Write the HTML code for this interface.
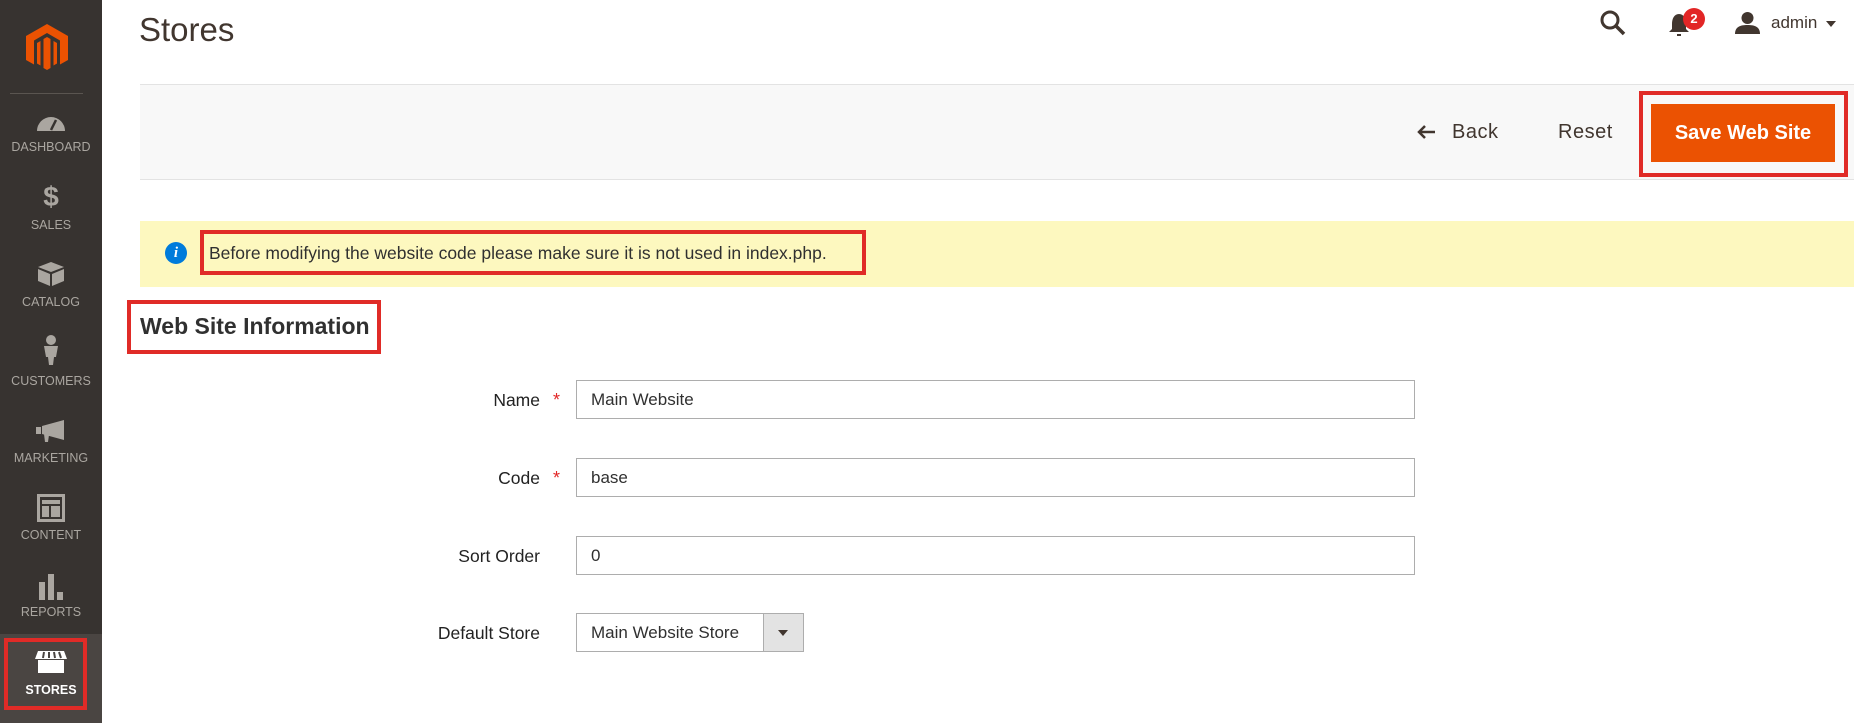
<!DOCTYPE html>
<html><head><meta charset="utf-8"><style>
*{margin:0;padding:0;box-sizing:border-box}
body{width:1860px;height:723px;overflow:hidden;background:#fff;font-family:"Liberation Sans",sans-serif;color:#303030;position:relative}
.a{position:absolute}
#side{left:0;top:0;width:102px;height:723px;background:#373330}
.lbl{position:absolute;left:0;width:102px;text-align:center;color:#aaa6a0;font-size:12.5px;letter-spacing:0}
.ic{position:absolute;left:0;width:102px;display:flex;justify-content:center}
.red{position:absolute;border:4px solid #e02b27}
.inp{position:absolute;left:576px;width:839px;height:39px;border:1px solid #adadad;background:#fff;font-size:17px;padding:9px 14px;color:#303030}
.fl{position:absolute;font-size:17.5px;color:#222;text-align:right;width:300px;left:240px}
.ast{position:absolute;left:553px;color:#e22626;font-size:18px}
</style></head><body>
<div id="side" class="a">
 <svg class="a" style="left:26px;top:24px" width="42" height="48" viewBox="0 0 42 48"><path d="M21 0L42 12V36L34 40.5V16.5L21 9 8 16.5V40.5L0 36V12Z" fill="#eb5202"/><path d="M17.5 15L21 13 24.5 15V44L21 46 17.5 44Z" fill="#eb5202"/><path d="M11 19L14.5 17V41.5L11 39.5Z M31 19L27.5 17V41.5L31 39.5Z" fill="#eb5202"/></svg>
 <div class="a" style="left:10px;top:93px;width:73px;height:1px;background:#5a5550"></div>
 <div class="ic" style="top:112px"><svg width="30" height="20" viewBox="0 0 30 20"><path d="M1 19A14 14 0 0 1 29 19Z" fill="#aaa6a0"/><path d="M15 18L20 8" stroke="#373330" stroke-width="2.5"/></svg></div>
 <div class="lbl" style="top:140px">DASHBOARD</div>
 <div class="ic" style="top:181px;color:#aaa6a0;font-size:28px;font-weight:bold">$</div>
 <div class="lbl" style="top:218px">SALES</div>
 <div class="ic" style="top:262px"><svg width="26" height="24" viewBox="0 0 26 24"><path d="M13 0L26 5 13 10 0 5Z" fill="#aaa6a0"/><path d="M0 7L12 12V24L0 19Z M26 7L14 12V24L26 19Z" fill="#aaa6a0"/></svg></div>
 <div class="lbl" style="top:295px">CATALOG</div>
 <div class="ic" style="top:335px"><svg width="16" height="30" viewBox="0 0 16 30"><circle cx="8" cy="5" r="5" fill="#aaa6a0"/><path d="M1 11H15L13 22H11L10 30H6L5 22H3Z" fill="#aaa6a0"/></svg></div>
 <div class="lbl" style="top:374px">CUSTOMERS</div>
 <div class="ic" style="top:420px"><svg width="30" height="22" viewBox="0 0 30 22"><path d="M0 7H5V14H0Z M6 6L28 0V20L6 14Z M8 14L13 15 12 22H9Z" fill="#aaa6a0"/></svg></div>
 <div class="lbl" style="top:451px">MARKETING</div>
 <div class="ic" style="top:494px"><svg width="28" height="28" viewBox="0 0 28 28"><rect x="1.5" y="1.5" width="25" height="25" fill="none" stroke="#aaa6a0" stroke-width="3"/><rect x="5" y="6" width="18" height="4" fill="#aaa6a0"/><rect x="5" y="12" width="7" height="11" fill="#aaa6a0"/><rect x="14" y="12" width="9" height="11" fill="#aaa6a0"/></svg></div>
 <div class="lbl" style="top:528px">CONTENT</div>
 <div class="ic" style="top:574px"><svg width="28" height="26" viewBox="0 0 28 26"><rect x="2" y="8" width="6" height="18" fill="#aaa6a0"/><rect x="11" y="0" width="6" height="26" fill="#aaa6a0"/><rect x="20" y="18" width="6" height="8" fill="#aaa6a0"/></svg></div>
 <div class="lbl" style="top:605px">REPORTS</div>
 <div class="a" style="left:0;top:634px;width:102px;height:89px;background:#4a4542"></div>
 <div class="ic" style="top:651px"><svg width="32" height="22" viewBox="0 0 32 22"><path d="M3 0H29L32 8H0Z" fill="#fff"/><path d="M9 1L8 7 M14 1L14 7 M19 1L20 7 M24 1L26 7" stroke="#4a4542" stroke-width="2"/><rect x="3" y="9" width="26" height="13" fill="#fff"/></svg></div>
 <div class="lbl" style="top:683px;color:#fff;font-weight:bold">STORES</div>
 <div class="red" style="left:4px;top:638px;width:83px;height:72px"></div>
</div>

<div class="a" style="left:139px;top:11px;font-size:33px;color:#41362f">Stores</div>
<svg class="a" style="left:1600px;top:10px" width="26" height="26" viewBox="0 0 26 26"><circle cx="10" cy="10" r="8" fill="none" stroke="#41362f" stroke-width="3"/><path d="M16 16L24 24" stroke="#41362f" stroke-width="3.5"/></svg>
<svg class="a" style="left:1669px;top:13px" width="22" height="24" viewBox="0 0 22 24"><path d="M10 1C5 1 3 6 3 11V16L0 19H20L17 16V11C17 6 15 1 10 1Z M8 21H12V23H8Z" fill="#41362f"/></svg>
<div class="a" style="left:1683px;top:8px;width:22px;height:22px;border-radius:50%;background:#e22626;color:#fff;font-size:13px;font-weight:bold;text-align:center;line-height:22px">2</div>
<svg class="a" style="left:1735px;top:12px" width="25" height="22" viewBox="0 0 25 22"><circle cx="12.5" cy="6" r="6" fill="#41362f"/><path d="M0 22C0 15 5 13 12.5 13S25 15 25 22Z" fill="#41362f"/></svg>
<div class="a" style="left:1771px;top:13px;font-size:17px;color:#41362f">admin</div>
<div class="a" style="left:1826px;top:21px;border-left:5px solid transparent;border-right:5px solid transparent;border-top:6px solid #41362f"></div>

<div class="a" style="left:140px;top:84px;width:1714px;height:96px;background:#f8f8f8;border-top:1px solid #e3e3e3;border-bottom:1px solid #e3e3e3"></div>
<svg class="a" style="left:1416px;top:124px" width="20" height="16" viewBox="0 0 20 16"><path d="M19 8H3 M9 2L3 8 9 14" fill="none" stroke="#41362f" stroke-width="2.5"/></svg>
<div class="a" style="left:1452px;top:121px;font-size:20px;color:#41362f;letter-spacing:.5px">Back</div>
<div class="a" style="left:1558px;top:121px;font-size:20px;color:#41362f;letter-spacing:.5px">Reset</div>
<div class="a" style="left:1651px;top:104px;width:184px;height:58px;background:#eb5202;color:#fff;font-size:20px;font-weight:bold;text-align:center;line-height:58px">Save Web Site</div>
<div class="red" style="left:1639px;top:91px;width:209px;height:86px"></div>

<div class="a" style="left:140px;top:221px;width:1714px;height:66px;background:#fdf8bf"></div>
<div class="a" style="left:165px;top:242px;width:22px;height:22px;border-radius:50%;background:#007bdb;color:#fff;font:italic bold 15px 'Liberation Serif',serif;text-align:center;line-height:22px">i</div>
<div class="a" style="left:209px;top:243px;font-size:17.5px;color:#303030">Before modifying the website code please make sure it is not used in index.php.</div>
<div class="red" style="left:200px;top:230px;width:666px;height:45px"></div>

<div class="a" style="left:140px;top:313px;font-size:23px;color:#303030;font-weight:bold">Web Site Information</div>
<div class="red" style="left:127px;top:300px;width:254px;height:54px"></div>

<div class="fl" style="top:390px">Name</div><div class="ast" style="top:390px">*</div>
<div class="inp" style="top:380px">Main Website</div>
<div class="fl" style="top:468px">Code</div><div class="ast" style="top:468px">*</div>
<div class="inp" style="top:458px">base</div>
<div class="fl" style="top:546px">Sort Order</div>
<div class="inp" style="top:536px">0</div>
<div class="fl" style="top:623px">Default Store</div>
<div class="inp" style="top:613px;width:228px">Main Website Store</div>
<div class="a" style="left:763px;top:614px;width:40px;height:37px;background:#e3e3e3;border-left:1px solid #adadad"></div>
<div class="a" style="left:778px;top:630px;border-left:5px solid transparent;border-right:5px solid transparent;border-top:6px solid #41362f"></div>
</body></html>
